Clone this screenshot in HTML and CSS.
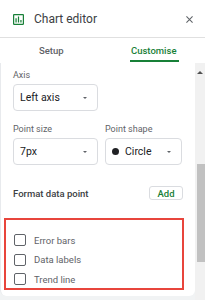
FILE: index.html
```html
<!DOCTYPE html>
<html lang="en">

<head>
    <meta charset="UTF-8">
    <title>Chart editor</title>
    <link rel="stylesheet" href="styles.css">
</head>

<body>
    <div class="editor">
        <div class="header">
            <svg class="logo" viewBox="3 3 18 18" width="11" height="11">
                <path fill="#188038" d="M19 3H5c-1.1 0-2 .9-2 2v14c0 1.1.9 2 2 2h14c1.1 0 2-.9 2-2V5c0-1.1-.9-2-2-2zm0 16H5V5h14v14zM7 10h2v7H7zm4-3h2v10h-2zm4 6h2v4h-2z"/>
            </svg>
            <span class="title">Chart editor</span>
            <svg class="close" viewBox="0 0 8 8" width="7" height="7">
                <path d="M0.5 0.5L7.5 7.5M7.5 0.5L0.5 7.5" stroke="#5f6368" stroke-width="1.2"/>
            </svg>
        </div>

        <div class="tabs">
            <div class="tab">Setup</div>
            <div class="tab tab-active">Customise</div>
        </div>

        <div class="body">
            <div class="content">
                <div class="label">Axis</div>
                <div class="select select-wide">
                    <span>Left axis</span>
                    <span class="caret"></span>
                </div>

                <div class="pair">
                    <div>
                        <div class="label">Point size</div>
                        <div class="select">
                            <span>7px</span>
                            <span class="caret"></span>
                        </div>
                    </div>
                    <div>
                        <div class="label">Point shape</div>
                        <div class="select">
                            <span class="shape"><span class="dot"></span>Circle</span>
                            <span class="caret"></span>
                        </div>
                    </div>
                </div>

                <div class="format-row">
                    <span class="format-title">Format data point</span>
                    <button class="add-btn">Add</button>
                </div>

                <div class="highlight">
                    <label class="check"><span class="box"></span>Error bars</label>
                    <label class="check"><span class="box"></span>Data labels</label>
                    <label class="check"><span class="box"></span>Trend line</label>
                </div>
            </div>

            <div class="scrollbar">
                <span class="arrow"></span>
                <div class="thumb"></div>
            </div>
        </div>
    </div>
</body>

</html>
```

FILE: styles.css
```css
* {
    margin: 0px;
    padding: 0px;
    box-sizing: border-box;
}

body {
    width: 205px;
    height: 300px;
    overflow: hidden;
    background-color: #f1f3f4;
    font-family: Roboto, "Liberation Sans", sans-serif;
}

.editor {
    height: 300px;
    display: flex;
    flex-direction: column;
}

/* ---------- header ---------- */

.header {
    height: 38px;
    background-color: white;
    border-bottom: 1px solid #e0e0e0;
    display: flex;
    align-items: center;
    padding: 0 12px 0 13px;
}

.logo {
    display: block;
    margin-top: 1px;
}

.title {
    margin-left: 10px;
    font-size: 12px;
    color: #3c4043;
    flex: 1;
}

.close {
    display: block;
    margin-top: 1px;
}

/* ---------- tabs ---------- */

.tabs {
    height: 25px;
    background-color: white;
    display: flex;
}

.tab {
    flex: 1;
    display: flex;
    justify-content: center;
    align-items: center;
    font-size: 9.5px;
    font-weight: 500;
    color: #5f6368;
    position: relative;
}

.tab-active {
    color: #188038;
}

.tab-active::after {
    content: "";
    position: absolute;
    left: 27px;
    right: 26px;
    bottom: 1px;
    height: 2px;
    background-color: #188038;
}

/* ---------- body ---------- */

.body {
    flex: 1;
    display: flex;
    min-height: 0;
}

.content {
    width: 195px;
    height: 233px;
    background-color: white;
    border-left: 1px solid #e8eaed;
    border-radius: 0 0 6px 6px;
    padding: 7px 12px 0 12px;
}

.label {
    font-size: 9px;
    line-height: 11px;
    color: #5f6368;
}

.select {
    margin-top: 3px;
    height: 27px;
    border: 1px solid #dadce0;
    border-radius: 4px;
    display: flex;
    align-items: center;
    justify-content: space-between;
    padding: 0 10px 0 6px;
    font-size: 10.5px;
    color: #202124;
}

.select-wide {
    width: 85px;
}

.caret {
    width: 0;
    height: 0;
    border-left: 2.5px solid transparent;
    border-right: 2.5px solid transparent;
    border-top: 2.5px solid #5f6368;
}

.shape {
    display: flex;
    align-items: center;
}

.dot {
    width: 7px;
    height: 7px;
    border-radius: 50%;
    background-color: #202124;
    margin-right: 6px;
}

.pair {
    margin-top: 13px;
    display: grid;
    grid-template-columns: 85px 77px;
    gap: 7px;
}

.format-row {
    margin-top: 21px;
    height: 14px;
    display: flex;
    align-items: center;
    justify-content: space-between;
}

.format-title {
    font-size: 9.5px;
    font-weight: 500;
    color: #3c4043;
}

.add-btn {
    width: 34px;
    height: 14px;
    border: 1px solid #dadce0;
    border-radius: 3px;
    background-color: white;
    color: #188038;
    font-family: Roboto, "Liberation Sans", sans-serif;
    font-size: 9.5px;
    font-weight: 500;
}

/* ---------- highlighted checkboxes ---------- */

.highlight {
    margin: 18px -1px 0 -9px;
    height: 72px;
    border: 2px solid #e8453c;
    padding: 14px 0 0 8px;
    display: flex;
    flex-direction: column;
    gap: 7.5px;
}

.check {
    display: flex;
    align-items: center;
    height: 12px;
    font-size: 9.5px;
    color: #5f6368;
}

.box {
    width: 12px;
    height: 12px;
    border: 1.5px solid #5f6368;
    border-radius: 2px;
    margin-right: 8px;
}

/* ---------- scrollbar ---------- */

.scrollbar {
    width: 10px;
    background-color: #f1f1f1;
    position: relative;
}

.arrow {
    position: absolute;
    top: 8px;
    left: 2px;
    width: 0;
    height: 0;
    border-left: 3px solid transparent;
    border-right: 3px solid transparent;
    border-bottom: 3px solid #505050;
}

.thumb {
    position: absolute;
    top: 101px;
    left: 2px;
    width: 8px;
    height: 98px;
    background-color: #c1c1c1;
}
```
